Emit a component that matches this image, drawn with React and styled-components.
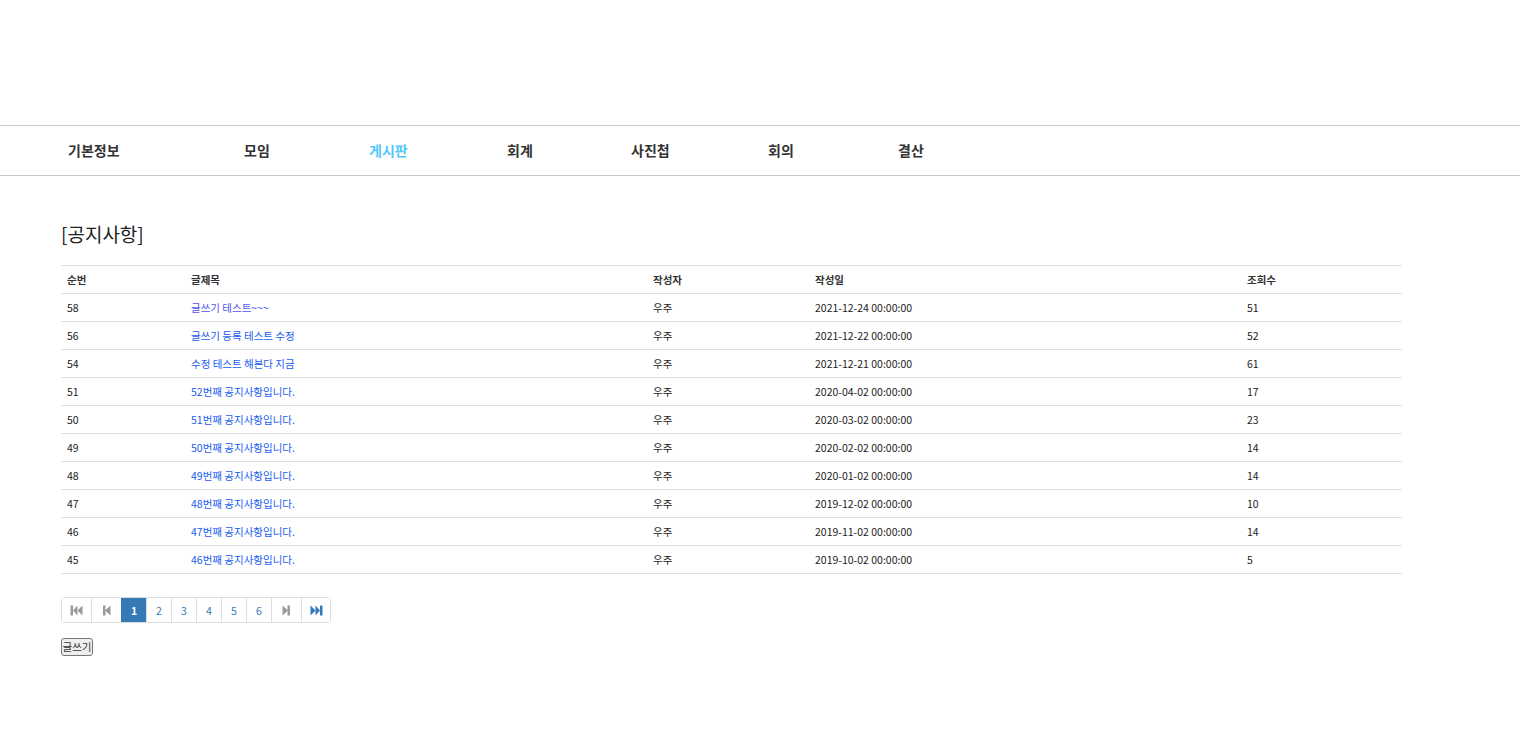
import React from 'react'
import styled, { createGlobalStyle } from 'styled-components'

const GlobalStyle = createGlobalStyle`
  html, body {
    margin: 0;
    padding: 0;
    background: #fff;
  }
  body {
    font-family: "Noto Sans CJK KR", "Noto Sans", sans-serif;
    font-size: 10.5px;
    color: #333;
  }
`

const menus = [
  { name: '기본정보', width: 176 },
  { name: '모임', width: 125 },
  { name: '게시판', width: 138, active: true },
  { name: '회계', width: 124 },
  { name: '사진첩', width: 137 },
  { name: '회의', width: 130 },
  { name: '결산', width: 100 },
]

const rows = [
  { no: 58, title: '글쓰기 테스트~~~', date: '2021-12-24 00:00:00', hit: 51, visited: true },
  { no: 56, title: '글쓰기 등록 테스트 수정', date: '2021-12-22 00:00:00', hit: 52 },
  { no: 54, title: '수정 테스트 해본다 지금', date: '2021-12-21 00:00:00', hit: 61 },
  { no: 51, title: '52번째 공지사항입니다.', date: '2020-04-02 00:00:00', hit: 17 },
  { no: 50, title: '51번째 공지사항입니다.', date: '2020-03-02 00:00:00', hit: 23 },
  { no: 49, title: '50번째 공지사항입니다.', date: '2020-02-02 00:00:00', hit: 14 },
  { no: 48, title: '49번째 공지사항입니다.', date: '2020-01-02 00:00:00', hit: 14 },
  { no: 47, title: '48번째 공지사항입니다.', date: '2019-12-02 00:00:00', hit: 10 },
  { no: 46, title: '47번째 공지사항입니다.', date: '2019-11-02 00:00:00', hit: 14 },
  { no: 45, title: '46번째 공지사항입니다.', date: '2019-10-02 00:00:00', hit: 5 },
]

const Triangle = ({ dir = 'left', double = false }) => (
  <svg width="13" height="11" viewBox="0 0 13 11" fill="currentColor">
    <g transform={dir === 'right' ? 'matrix(-1 0 0 1 13 0)' : undefined}>
      <rect x={double ? 0.5 : 3} y="0.5" width="2.5" height="10" />
      <path d={double ? 'M7.5 0.5V10.5L3 5.5Z' : 'M10.5 0.5V10.5L5 5.5Z'} />
      {double && <path d="M12.5 0.5V10.5L7.5 5.5Z" />}
    </g>
  </svg>
)

const App = () => {
  return (
    <>
      <GlobalStyle />
      <Header />
      <Nav>
        {menus.map((m) => (
          <NavItem key={m.name} $w={m.width} $active={m.active}>
            {m.name}
          </NavItem>
        ))}
      </Nav>
      <Main>
        <Title>[공지사항]</Title>
        <Table>
          <colgroup>
            <col width="124" />
            <col width="462" />
            <col width="162" />
            <col width="432" />
            <col width="161" />
          </colgroup>
          <thead>
            <tr>
              <Th>순번</Th>
              <Th>글제목</Th>
              <Th>작성자</Th>
              <Th>작성일</Th>
              <Th>조회수</Th>
            </tr>
          </thead>
          <tbody>
            {rows.map((r) => (
              <tr key={r.no}>
                <Td>{r.no}</Td>
                <Td>
                  <TitleLink href="#" $visited={r.visited}>{r.title}</TitleLink>
                </Td>
                <Td>우주</Td>
                <Td>{r.date}</Td>
                <Td>{r.hit}</Td>
              </tr>
            ))}
          </tbody>
        </Table>
        <Pager>
          <PageBtn $w={29} $muted><Triangle double /></PageBtn>
          <PageBtn $w={30} $muted><Triangle /></PageBtn>
          <PageBtn $w={25} $current>1</PageBtn>
          <PageBtn $w={25}>2</PageBtn>
          <PageBtn $w={25}>3</PageBtn>
          <PageBtn $w={25}>4</PageBtn>
          <PageBtn $w={25}>5</PageBtn>
          <PageBtn $w={25}>6</PageBtn>
          <PageBtn $w={30} $muted><Triangle dir="right" /></PageBtn>
          <PageBtn $w={29}><Triangle dir="right" double /></PageBtn>
        </Pager>
        <WriteButton>글쓰기</WriteButton>
      </Main>
    </>
  )
}

export default App

const Header = styled.header`
  height: 125px;
`

const Nav = styled.nav`
  display: flex;
  height: 49px;
  padding-left: 68px;
  border-top: 1px solid #c8c8c8;
  border-bottom: 1px solid #c8c8c8;
`

const NavItem = styled.a`
  flex: 0 0 ${(p) => p.$w}px;
  font-size: 14px;
  font-weight: 700;
  line-height: 49px;
  color: ${(p) => (p.$active ? '#4fc8fa' : '#333')};
`

const Main = styled.main`
  width: 1341px;
  margin-left: 61px;
`

const Title = styled.h2`
  margin: 43px 0 16px;
  font-size: 19px;
  font-weight: 400;
  line-height: 30px;
  color: #222;
`

const Table = styled.table`
  width: 100%;
  table-layout: fixed;
  border-collapse: collapse;
  border-top: 1px solid #ddd;
`

const Th = styled.th`
  height: 27px;
  padding: 0 6px;
  text-align: left;
  font-size: 10.5px;
  font-weight: 700;
  color: #333;
  border-bottom: 1px solid #ddd;
`

const Td = styled.td`
  height: 27px;
  padding: 0 6px;
  font-size: 10.5px;
  color: #222;
  border-bottom: 1px solid #ddd;
`

const TitleLink = styled.a`
  color: ${(p) => (p.$visited ? '#4f55f0' : '#1a5cf0')};
  text-decoration: none;
`

const Pager = styled.div`
  display: flex;
  width: fit-content;
  margin-top: 23px;
  border: 1px solid #ddd;
  border-radius: 3px;
  overflow: hidden;
`

const PageBtn = styled.a`
  display: flex;
  align-items: center;
  justify-content: center;
  box-sizing: border-box;
  width: ${(p) => p.$w}px;
  height: 24px;
  font-size: 10.5px;
  font-weight: ${(p) => (p.$current ? 700 : 400)};
  background: ${(p) => (p.$current ? '#337ab7' : '#fff')};
  color: ${(p) => (p.$current ? '#fff' : p.$muted ? '#999' : '#337ab7')};
  border-left: 1px solid ${(p) => (p.$current ? '#337ab7' : '#ddd')};

  &:first-child {
    border-left: 0;
  }
`

const WriteButton = styled.button`
  display: block;
  box-sizing: border-box;
  height: 18px;
  margin-top: 15px;
  padding: 0 0.5px;
  font-family: inherit;
  font-size: 10.5px;
  line-height: 14px;
  color: #333;
  background: #efefef;
  border: 1px solid #767676;
  border-radius: 3px;
`
